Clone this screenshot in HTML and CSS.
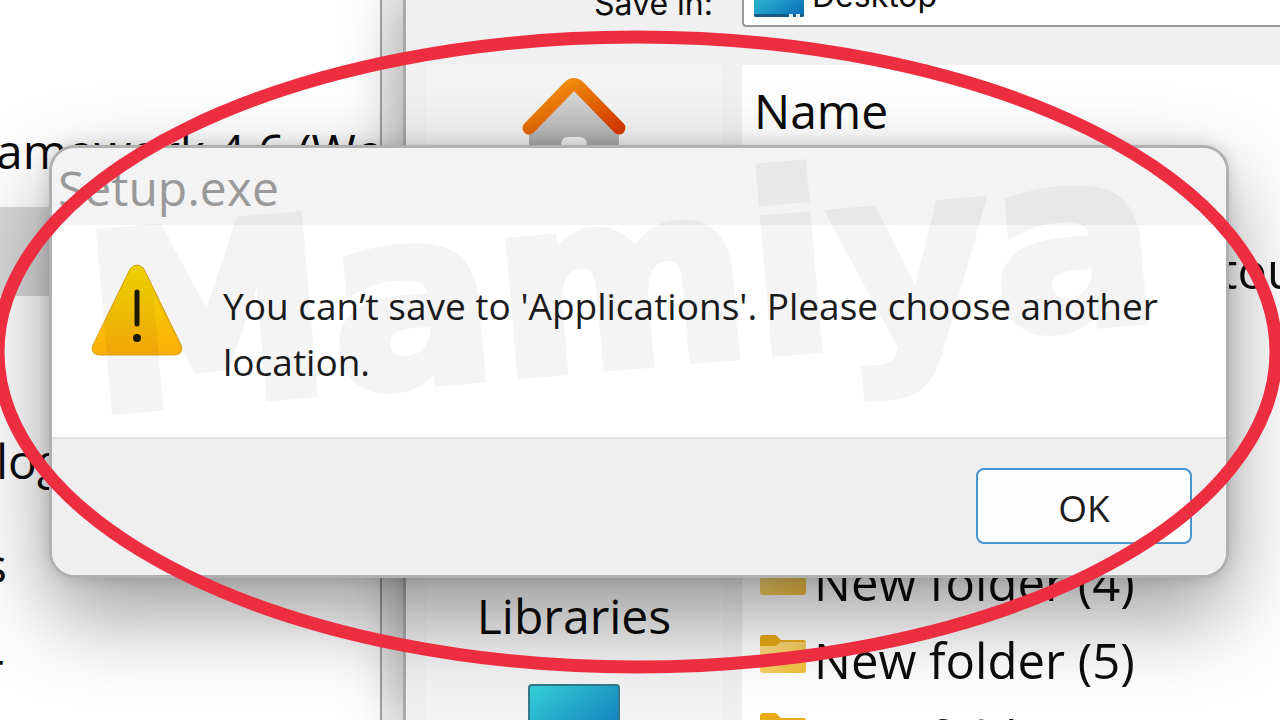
FILE: index.html
```html
<!DOCTYPE html>
<html lang="en">
<head>
    <meta charset="UTF-8">
    <meta name="viewport" content="width=device-width, initial-scale=1.0">
    <title>Setup.exe</title>
    <link rel="stylesheet" href="styles.css">
</head>
<body>

    <div class="desktop">

        <!-- Window at the back -->
        <ul class="programs">
            <li>amework 4.6 (We</li>
            <li class="selected"></li>
            <li></li>
            <li>log</li>
            <li class="scrolled">s</li>
            <li class="scrolled">r</li>
        </ul>
        <div class="window-edge"></div>

        <!-- Save dialog -->
        <div class="save-window">
            <div class="toolbar">
                <label for="saveIn">Save in:</label>
                <div class="combo">
                    <svg class="combo-icon" viewBox="0 0 50 42">
                        <defs>
                            <linearGradient id="screen" x1="0" y1="0" x2="1" y2="1">
                                <stop offset="0" stop-color="#35d4d8"/>
                                <stop offset="1" stop-color="#0b6ab8"/>
                            </linearGradient>
                        </defs>
                        <rect width="50" height="42" rx="2" fill="url(#screen)"/>
                        <path d="M0 39h50v1a2 2 0 0 1-2 2H2a2 2 0 0 1-2-2z" fill="#175a86"/>
                        <path d="M35 39h4v3h-4zM42 39h4v3h-4z" fill="#d8eefa"/>
                    </svg>
                    <select id="saveIn">
                        <option>Desktop</option>
                    </select>
                </div>
            </div>

            <div class="browser">
                <ul class="places">
                    <li>
                        <svg class="home-icon" viewBox="0 0 104 100">
                            <defs>
                                <linearGradient id="roof" x1="0" y1="0" x2="1" y2="1">
                                    <stop offset="0.2" stop-color="#ef8a0c"/>
                                    <stop offset="1" stop-color="#d83b01"/>
                                </linearGradient>
                                <linearGradient id="wall" x1="0" y1="0" x2="0" y2="1">
                                    <stop offset="0" stop-color="#dcdcdc"/>
                                    <stop offset="0.7" stop-color="#a9a9a9"/>
                                </linearGradient>
                            </defs>
                            <path d="M7 53 52 9l45 44v47H7z" fill="url(#wall)"/>
                            <path d="M39 100V66a7 7 0 0 1 7-7h12a7 7 0 0 1 7 7v34z" fill="#f3f3f3"/>
                            <path d="M7 50 47 9q5-5 10 0l40 41" fill="none" stroke="url(#roof)" stroke-width="13" stroke-linecap="round"/>
                        </svg>
                    </li>
                    <li></li>
                    <li><span>Libraries</span></li>
                    <li>
                        <svg class="pc-icon" viewBox="0 0 92 70">
                            <rect x="1" y="1" width="90" height="68" rx="3" fill="url(#screen)" stroke="#33788f" stroke-width="2"/>
                        </svg>
                    </li>
                </ul>

                <table class="files">
                    <thead>
                        <tr>
                            <th class="col-name">Name</th>
                            <th></th>
                        </tr>
                    </thead>
                    <tbody>
                        <tr><td></td><td></td></tr>
                        <tr><td></td><td>tour</td></tr>
                        <tr><td></td><td></td></tr>
                        <tr><td></td><td></td></tr>
                        <tr><td></td><td></td></tr>
                        <tr>
                            <td>
                                <div class="file">
                                    <svg viewBox="0 0 46 38"><use href="#folder"/></svg>
                                    New folder (4)
                                </div>
                            </td>
                            <td></td>
                        </tr>
                        <tr>
                            <td>
                                <div class="file">
                                    <svg viewBox="0 0 46 38"><use href="#folder"/></svg>
                                    New folder (5)
                                </div>
                            </td>
                            <td></td>
                        </tr>
                        <tr>
                            <td>
                                <div class="file">
                                    <svg viewBox="0 0 46 38"><use href="#folder"/></svg>
                                    New folder (6)
                                </div>
                            </td>
                            <td></td>
                        </tr>
                    </tbody>
                </table>
            </div>
        </div>

        <!-- Error message -->
        <div class="dialog" role="alertdialog" aria-labelledby="dialogTitle" aria-describedby="dialogText">
            <h1 class="dialog-title" id="dialogTitle">Setup.exe</h1>
            <div class="dialog-body">
                <svg class="warning-icon" viewBox="0 0 92 92">
                    <defs>
                        <linearGradient id="warning" x1="0" y1="0" x2="0" y2="1">
                            <stop offset="0" stop-color="#f5dc00"/>
                            <stop offset="1" stop-color="#fbad08"/>
                        </linearGradient>
                    </defs>
                    <path d="M39 5q7-8 14 0l37 76q3 9-6 10H8q-9-1-6-10z" fill="url(#warning)" stroke="#dba514" stroke-width="1"/>
                    <path d="M46 28v32" stroke="#1f1a00" stroke-width="5" stroke-linecap="round"/>
                    <circle cx="46" cy="74" r="4" fill="#1f1a00"/>
                </svg>
                <p id="dialogText">You can’t save to 'Applications'. Please choose another location.</p>
            </div>
            <div class="dialog-footer">
                <button class="ok-button" type="button">OK</button>
            </div>
        </div>

        <div class="watermark">Mamiya</div>

        <svg class="marker" viewBox="0 0 1280 720" preserveAspectRatio="none">
            <ellipse cx="637" cy="352" rx="639" ry="315" fill="none" stroke="#ed2d40" stroke-width="13"/>
        </svg>

    </div>

    <svg width="0" height="0">
        <defs>
            <linearGradient id="folderFront" x1="0" y1="0" x2="1" y2="1">
                <stop offset="0" stop-color="#ffe08a"/>
                <stop offset="1" stop-color="#f2bf38"/>
            </linearGradient>
            <g id="folder">
                <path d="M0 3a3 3 0 0 1 3-3h11q2 0 3 1l4 4h22a3 3 0 0 1 3 3v12H0z" fill="#e9ab17"/>
                <path d="M0 11h14q2 0 3-1l4-3h25v28a3 3 0 0 1-3 3H3a3 3 0 0 1-3-3z" fill="url(#folderFront)"/>
            </g>
        </defs>
    </svg>

</body>
</html>
```
FILE: styles.css
```css
* {
    box-sizing: border-box;
}
body {
    font-family: 'Open Sans', sans-serif;
    background-color: #fff;
    color: #0c0c0c;
    margin: 0;
    font-size: 48px;
    line-height: 56px;
    overflow: hidden;
}
ul {
    list-style: none;
    margin: 0;
    padding: 0;
}
svg {
    display: block;
    flex: none;
}
.desktop {
    position: relative;
    display: flex;
    height: 100vh;
    overflow: hidden;
}

/* back window */
.programs {
    flex: 0 0 380px;
    padding-top: 103px;
    overflow: hidden;
    white-space: nowrap;
    text-indent: -4px;
}
.programs li {
    height: 104px;
    padding-top: 20px;
}
.programs .selected {
    height: 89px;
    background-color: #d9d9d9;
}
.programs li:nth-child(3) {
    height: 117px;
}
.programs .scrolled {
    text-indent: -16px;
}
.window-edge {
    flex: 0 0 23px;
    border-left: 2px solid #a6a6a6;
    background-color: #f0f0f0;
}

/* save window */
.save-window {
    flex: 1;
    min-width: 0;
    background-color: #f0f0f0;
    border-left: 3px solid #a9a9a9;
    box-shadow: 0 0 56px rgba(0, 0, 0, 0.35);
}
.toolbar {
    display: flex;
    align-items: flex-end;
    height: 27px;
    padding-left: 188px;
    font-family: Inter, sans-serif;
    font-size: 32px;
    line-height: 46px;
}
.toolbar label {
    width: 148px;
}
.combo {
    flex: 1;
    display: flex;
    align-items: center;
    gap: 8px;
    height: 62px;
    padding-left: 10px;
    border: 2px solid #9b9b9b;
    border-right: none;
    border-radius: 4px 0 0 4px;
    background-color: #fff;
}
.combo-icon {
    width: 50px;
    height: 42px;
}
.combo select {
    flex: 1;
    appearance: none;
    border: none;
    padding: 0;
    background: none;
    color: inherit;
    font: inherit;
}
.browser {
    display: flex;
    gap: 20px;
    padding: 38px 0 0 20px;
}
.places {
    flex: 0 0 296px;
    background-color: #f3f3f3;
}
.places li {
    display: flex;
    flex-direction: column;
    align-items: center;
    height: 202px;
    padding-top: 13px;
}
.places span {
    margin-top: auto;
    padding-bottom: 27px;
}
.home-icon {
    width: 104px;
    height: 100px;
}
.pc-icon {
    width: 92px;
    height: 70px;
}
.files {
    flex: 1;
    width: 100%;
    min-width: 0;
    align-self: flex-start;
    table-layout: fixed;
    border-collapse: collapse;
    background-color: #fff;
    white-space: nowrap;
}
.files th {
    height: 88px;
    padding: 4px 0 0 12px;
    font-weight: normal;
    text-align: left;
}
.files .col-name {
    width: 478px;
}
.files td {
    height: 78px;
    padding: 0;
    font-size: 49px;
    overflow: hidden;
}
.file {
    display: flex;
    align-items: flex-start;
    gap: 8px;
    padding-left: 18px;
}
.file svg {
    width: 46px;
    height: 38px;
    margin-top: 3px;
}

/* message box */
.dialog {
    position: absolute;
    top: 145px;
    left: 49px;
    right: 51px;
    border: 3px solid #b0b0b0;
    border-radius: 26px;
    background-color: #fff;
    overflow: hidden;
    box-shadow: 0 36px 88px rgba(0, 0, 0, 0.4), 0 0 16px rgba(0, 0, 0, 0.15);
}
.dialog-title {
    margin: 0;
    height: 77px;
    padding: 12px 6px;
    background-color: #f3f3f3;
    color: #999;
    font-size: 48px;
    font-weight: normal;
}
.dialog-body {
    display: flex;
    gap: 40px;
    height: 212px;
    padding: 39px;
    color: #1c1c1c;
    font-size: 37px;
}
.dialog-body p {
    margin: 0;
    padding-top: 14px;
}
.warning-icon {
    width: 92px;
    height: 92px;
}
.dialog-footer {
    display: flex;
    justify-content: flex-end;
    padding: 29px 34px 31px;
    border-top: 2px solid #e2e2e2;
    background-color: #efefef;
}
.ok-button {
    width: 216px;
    height: 76px;
    padding: 4px 0 0;
    border: 2px solid #4a94cf;
    border-radius: 8px;
    background-color: #fdfdfd;
    color: #1c1c1c;
    font: inherit;
    font-size: 37px;
}

/* overlays */
.watermark {
    position: absolute;
    top: 132px;
    left: 84px;
    color: #000;
    -webkit-text-stroke: 8px #000;
    opacity: 0.04;
    font-family: 'DejaVu Sans', sans-serif;
    font-size: 245px;
    font-weight: bold;
    line-height: 300px;
    transform: rotate(-5deg);
    pointer-events: none;
}
.marker {
    position: absolute;
    inset: 0;
    width: 100%;
    height: 100%;
    pointer-events: none;
}
```
